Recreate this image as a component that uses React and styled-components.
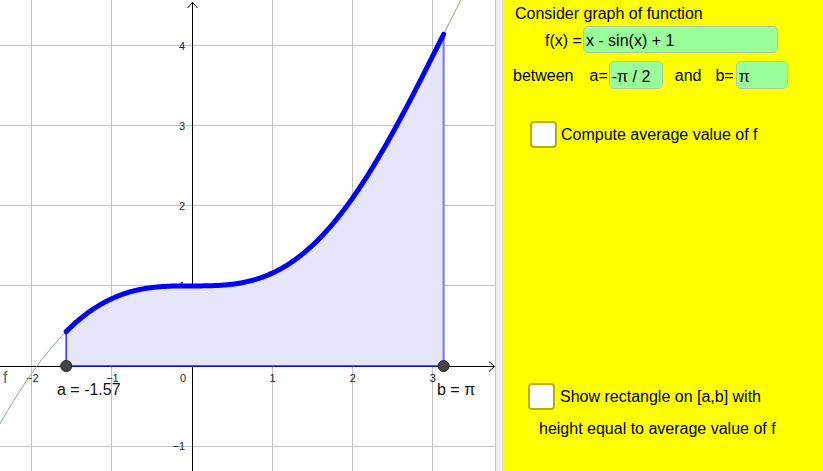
import React from "react";
import styled, { createGlobalStyle } from "styled-components";

const GlobalStyle = createGlobalStyle`
  html, body {
    margin: 0;
    padding: 0;
    background: #fff;
  }
  body {
    font-family: "Liberation Sans", Arial, sans-serif;
  }
`;

// graph coordinates
const X0 = 192;
const Y0 = 366;
const S = 80.1;
const W = 495;
const H = 471;
const px = (x) => X0 + S * x;
const py = (y) => Y0 - S * y;
const f = (x) => x - Math.sin(x) + 1;
const A = -Math.PI / 2;
const B = Math.PI;
const crisp = (v) => Math.floor(v) + 0.5;

const curvePoints = (from, to, steps = 240) => {
  const pts = [];
  for (let i = 0; i <= steps; i++) {
    const x = from + ((to - from) * i) / steps;
    pts.push(`${px(x).toFixed(2)} ${py(f(x)).toFixed(2)}`);
  }
  return pts;
};

const fullCurve = "M" + curvePoints(-2.5, 3.5).join(" L");
const boldCurve = "M" + curvePoints(A, B).join(" L");
const region =
  `M${px(A)} ${Y0} L` + curvePoints(A, B).join(" L") + ` L${px(B)} ${Y0} Z`;

const xTicks = [-2, -1, 1, 2, 3];
const yTicks = [-1, 1, 2, 3, 4];

const Graph = () => (
  <svg width={W} height={H} viewBox={`0 0 ${W} ${H}`}>
    <g stroke="#c0c0c0" strokeWidth="1" shapeRendering="crispEdges">
      {xTicks.map((t) => (
        <line key={"gx" + t} x1={crisp(px(t))} y1="0" x2={crisp(px(t))} y2={H} />
      ))}
      {yTicks.map((t) => (
        <line key={"gy" + t} x1="0" y1={crisp(py(t))} x2={W} y2={crisp(py(t))} />
      ))}
    </g>

    <g stroke="#000" strokeWidth="1" fill="none">
      <line x1="0" y1={Y0 + 0.5} x2="494" y2={Y0 + 0.5} />
      <polyline points={`489,361.5 494.5,366.5 489,371.5`} />
      <line x1={X0 + 0.5} y1="2" x2={X0 + 0.5} y2={H} />
      <polyline points={`187.5,8 192.5,2.5 197.5,8`} />
    </g>

    <g fontSize="11" fill="#222" fontFamily="'Liberation Sans', Arial, sans-serif">
      {xTicks.map((t) => (
        <text key={"lx" + t} x={px(t) + 0.5} y="382" textAnchor="middle">
          {t < 0 ? `\u2212${-t}` : t}
        </text>
      ))}
      <text x="186" y="382" textAnchor="end">0</text>
      {yTicks.map((t) => (
        <text key={"ly" + t} x="185" y={py(t) + 4} textAnchor="end">
          {t < 0 ? `\u2212${-t}` : t}
        </text>
      ))}
    </g>

    <path d={region} fill="#e5e5fb" stroke="none" />
    <line x1={px(A)} y1={Y0} x2={px(B)} y2={Y0} stroke="#1a1aff" strokeWidth="1.6" />
    <line x1={px(A)} y1={Y0} x2={px(A)} y2={py(f(A))} stroke="#3a3aff" strokeWidth="1.6" />
    <line x1={px(B)} y1={Y0} x2={px(B)} y2={py(f(B))} stroke="#7474ff" strokeWidth="2" />

    <path d={fullCurve} fill="none" stroke="#7fb27f" strokeWidth="1" />
    <path
      d={boldCurve}
      fill="none"
      stroke="#0000ff"
      strokeWidth="5"
      strokeLinecap="round"
      strokeLinejoin="round"
    />

    <circle cx={px(A)} cy={Y0} r="5.5" fill="#444" stroke="#222" strokeWidth="1" />
    <circle cx={px(B)} cy={Y0} r="5.5" fill="#444" stroke="#222" strokeWidth="1" />

    <g fontSize="16" fontFamily="'Liberation Sans', Arial, sans-serif">
      <text x="3" y="383" fill="#4f6f4f">f</text>
      <text x="57" y="395" fill="#111">a = -1.57</text>
      <text x="437" y="395" fill="#111">b = π</text>
    </g>
  </svg>
);

const Page = styled.div`
  display: flex;
  width: 823px;
  height: 471px;
  overflow: hidden;
`;

const GraphPanel = styled.div`
  width: ${W}px;
  height: ${H}px;
  background: #fff;
  flex: none;
  svg {
    display: block;
  }
`;

const Divider = styled.div`
  width: 6px;
  flex: none;
  background: #f0f0f0;
  border-left: 1px solid #c8c8c8;
  border-right: 1px solid #dedede;
`;

const SidePanel = styled.div`
  flex: 1;
  display: flex;
  flex-direction: column;
  background: #ffff00;
  color: #000;
  font-size: 16px;
  line-height: 20px;
  padding-top: 4px;
  padding-bottom: 32px;
  box-sizing: border-box;
`;

const Title = styled.div`
  padding-left: 12px;
`;

const Row = styled.div`
  display: flex;
  align-items: stretch;
  height: 27px;
  margin-top: ${(p) => p.$top}px;
  padding-left: ${(p) => p.$left}px;
`;

const Label = styled.span`
  display: flex;
  align-items: center;
  padding-top: 3px;
  margin-left: ${(p) => p.$gap || 0}px;
  margin-right: ${(p) => p.$after || 0}px;
  white-space: pre;
`;

const InputBox = styled.div`
  width: ${(p) => p.$width}px;
  height: ${(p) => p.$height || 27}px;
  box-sizing: border-box;
  display: flex;
  align-items: center;
  padding: 3px 0 0 2px;
  background: #99ff99;
  border: 1px solid #b2c8a2;
  border-radius: 5px;
  white-space: pre;
`;

const CheckRow = styled.div`
  display: flex;
  align-items: center;
  margin-top: ${(p) => (p.$top === "auto" ? "auto" : `${p.$top}px`)};
  padding-left: ${(p) => p.$left}px;
`;

const CheckBox = styled.span`
  width: 27px;
  height: 27px;
  box-sizing: border-box;
  flex: none;
  background: #fff;
  border: 2px solid #b3b300;
  border-radius: 4px;
  margin-right: ${(p) => p.$gap}px;
`;

const Caption = styled.div`
  margin-top: 9px;
  padding-left: 36px;
`;

export default function App() {
  return (
    <>
      <GlobalStyle />
      <Page>
        <GraphPanel>
          <Graph />
        </GraphPanel>
        <Divider />
        <SidePanel>
          <Title>Consider graph of function</Title>
          <Row $top={2} $left={42}>
            <Label $after={1}>f(x) =</Label>
            <InputBox $width={195}>x - sin(x) + 1</InputBox>
          </Row>
          <Row $top={8} $left={10}>
            <Label>between</Label>
            <Label $gap={16} $after={1}>a=</Label>
            <InputBox $width={54} $height={28}>-π / 2</InputBox>
            <Label $gap={12}>and</Label>
            <Label $gap={14} $after={2}>b=</Label>
            <InputBox $width={52} $height={28}>π</InputBox>
          </Row>
          <CheckRow $top={33} $left={27}>
            <CheckBox $gap={4} />
            <span>Compute average value of f</span>
          </CheckRow>
          <CheckRow $top="auto" $left={25}>
            <CheckBox $gap={5} />
            <span>Show rectangle on [a,b] with</span>
          </CheckRow>
          <Caption>height equal to average value of f</Caption>
        </SidePanel>
      </Page>
    </>
  );
}
